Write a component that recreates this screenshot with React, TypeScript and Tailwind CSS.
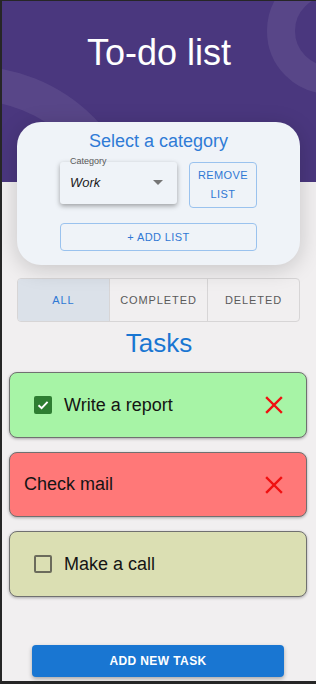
import React from 'react';

const FONT = { fontFamily: '"Liberation Sans", Arial, sans-serif' };

type Task = { id: number; title: string; status: 'done' | 'deleted' | 'open' };

const TASKS: Task[] = [
    { id: 1, title: 'Write a report', status: 'done' },
    { id: 2, title: 'Check mail', status: 'deleted' },
    { id: 3, title: 'Make a call', status: 'open' },
];

const CARD_BG: Record<Task['status'], string> = {
    done: 'bg-[#a7f4a6]',
    deleted: 'bg-[#ff7878]',
    open: 'bg-[#dbdfb3]',
};

const CloseIcon = () => (
    <svg width="18" height="18" viewBox="0 0 18 18" className="shrink-0">
        <path d="M2 2 L16 16 M16 2 L2 16" stroke="#f01010" strokeWidth="2.4" strokeLinecap="square" />
    </svg>
);

const CheckBox: React.FC<{ checked: boolean }> = ({ checked }) =>
    checked ? (
        <div className="w-[18px] h-[18px] rounded-[2px] bg-[#2e7d32] flex items-center justify-center shrink-0">
            <svg width="14" height="14" viewBox="0 0 14 14">
                <path d="M2.5 7.2 L5.6 10.2 L11.6 3.8" stroke="white" strokeWidth="1.9" fill="none" />
            </svg>
        </div>
    ) : (
        <div className="w-[18px] h-[18px] rounded-[2px] border-2 border-[#6b6b5c] shrink-0" />
    );

const TaskCard: React.FC<{ task: Task }> = ({ task }) => (
    <div
        className={`mx-[7px] w-[298px] ${task.status === 'deleted' ? 'h-[65px]' : 'h-[66px]'} mt-[14px] rounded-[8px] border border-[#707070] shadow-[0_1px_3px_rgba(0,0,0,0.3)] flex items-center ${CARD_BG[task.status]}`}
    >
        {task.status === 'deleted' ? (
            <span className="ml-[14px] text-[18px] text-[#141414]">{task.title}</span>
        ) : (
            <div className="flex items-center ml-[24px] gap-[12px]">
                <CheckBox checked={task.status === 'done'} />
                <span className="text-[18px] text-[#141414]">{task.title}</span>
            </div>
        )}
        <div className="flex-1" />
        {task.status !== 'open' && (
            <div className="mr-[23px] flex items-center">
                <CloseIcon />
            </div>
        )}
    </div>
);

const App: React.FC = () => {
    return (
        <div
            className="w-[316px] h-[684px] bg-[#262626] border-t border-l-2 border-b-[3px] border-[#262626]"
            style={FONT}
        >
            <div className="h-full flex flex-col bg-[#f1eff0] overflow-hidden">
                {/* Header */}
                <div className="relative h-[181px] shrink-0 bg-[#4a377e] overflow-hidden">
                    <svg className="absolute inset-0" width="314" height="181" viewBox="0 0 314 181">
                        <circle cx="-32" cy="240" r="158" fill="none" stroke="white" strokeOpacity="0.08" strokeWidth="34" />
                        <circle cx="328" cy="30" r="49" fill="none" stroke="white" strokeOpacity="0.08" strokeWidth="28" />
                    </svg>
                    <h1 className="relative pt-[34px] text-center text-[36px] leading-[36px] text-white">
                        To-do list
                    </h1>
                </div>

                {/* Category card */}
                <div className="relative z-10 -mt-[60px] mx-[15px] w-[283px] rounded-[24px] bg-[#eff3f8] shadow-[0_4px_22px_rgba(0,0,0,0.18)] pt-[8px] pb-[14px] flex flex-col items-center">
                    <h2 className="text-[18px] leading-[22px] text-[#2f7bd6]">Select a category</h2>
                    <div className="mt-[10px] flex items-start gap-[12px]">
                        <div className="relative w-[117px] h-[42px] rounded-[3px] bg-[#eff3f8] shadow-[0_2px_5px_rgba(0,0,0,0.35)] flex items-center px-[10px]">
                            <span className="absolute -top-[6px] left-[10px] text-[9px] leading-[10px] text-[#5a5a5a]">
                                Category
                            </span>
                            <span className="italic text-[13px] text-[#1a1a1a]">Work</span>
                            <div className="flex-1" />
                            <svg width="10" height="6" viewBox="0 0 10 6" className="mr-[4px]">
                                <path d="M0 0 L10 0 L5 5 Z" fill="#767676" />
                            </svg>
                        </div>
                        <button className="w-[68px] h-[46px] rounded-[4px] border border-[#9ac2ee] text-[11px] leading-[19px] font-medium tracking-[0.4px] text-[#2f78d4] flex flex-col items-center justify-center">
                            <span>REMOVE</span>
                            <span>LIST</span>
                        </button>
                    </div>
                    <button className="mt-[15px] w-[197px] h-[28px] rounded-[4px] border border-[#9ac2ee] text-[11px] font-medium tracking-[0.4px] text-[#2f78d4]">
                        + ADD LIST
                    </button>
                </div>

                {/* Filter tabs */}
                <div className="mt-[13px] mx-[15px] w-[283px] h-[44px] flex rounded-[4px] border border-[#d7d5d6] overflow-hidden text-[11px] tracking-[0.9px]">
                    <div className="w-[92px] flex items-center justify-center bg-[#dbe1e9] text-[#2f78d4] border-r border-[#d7d5d6]">
                        ALL
                    </div>
                    <div className="w-[98px] flex items-center justify-center text-[#5a5a5a] border-r border-[#d7d5d6]">
                        COMPLETED
                    </div>
                    <div className="flex-1 flex items-center justify-center text-[#5a5a5a]">DELETED</div>
                </div>

                <h2 className="mt-[6px] text-center text-[26px] leading-[30px] text-[#1976d2]">Tasks</h2>

                {TASKS.map(task => (
                    <TaskCard key={task.id} task={task} />
                ))}

                <button className="mt-[48px] mx-[30px] w-[252px] h-[32px] shrink-0 rounded-[4px] bg-[#1976d2] shadow-[0_2px_4px_rgba(0,0,0,0.3)] text-white text-[12px] font-bold tracking-[0.4px]">
                    ADD NEW TASK
                </button>
            </div>
        </div>
    );
};

export default App;
